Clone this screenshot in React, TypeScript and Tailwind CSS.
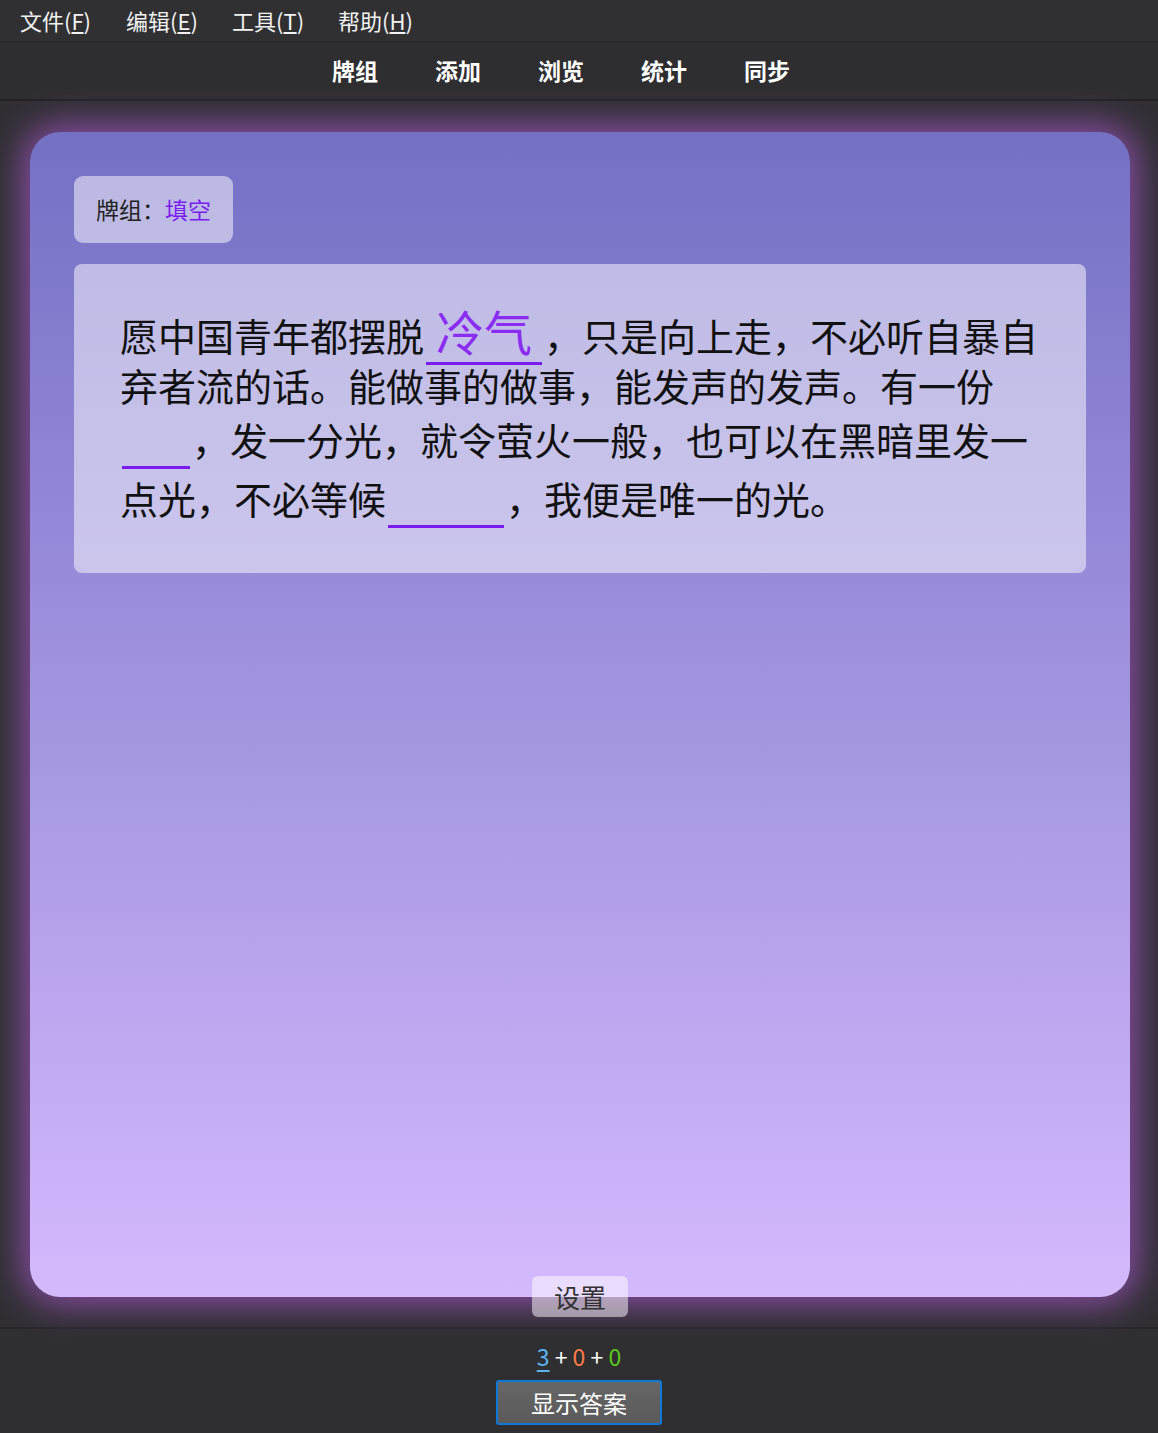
import React from "react";

const sans = { fontFamily: '"Noto Sans CJK SC", "Noto Sans", sans-serif' };

function MenuItem({ label, keyChar }: { label: string; keyChar: string }) {
  return (
    <span className="w-[106px] text-[22px] text-[#f2f2f2]">
      {label}(<u className="underline-offset-2">{keyChar}</u>)
    </span>
  );
}

function Blank({ answer, shown, push }: { answer: string; shown?: boolean; push?: boolean }) {
  return (
    <span
      className={`mx-[2px] inline-block border-b-[3px] border-[#7a1cf0] px-[10px] pb-[8px] text-[48px] leading-[48px] align-baseline ${
        push ? "mb-0" : "mb-[-8px]"
      } ${shown ? "text-[#8a2cf2]" : "text-transparent"}`}
    >
      {answer}
    </span>
  );
}

export default function App() {
  const tabs = ["牌组", "添加", "浏览", "统计", "同步"];

  return (
    <div className="flex h-[1433px] w-full flex-col bg-[#2f2f31]" style={sans}>
      {/* menu bar */}
      <div className="flex h-[42px] items-center border-b border-[#252527] bg-[#303032] px-[20px]">
        <MenuItem label="文件" keyChar="F" />
        <MenuItem label="编辑" keyChar="E" />
        <MenuItem label="工具" keyChar="T" />
        <MenuItem label="帮助" keyChar="H" />
      </div>

      {/* toolbar */}
      <div className="flex h-[59px] items-center justify-center gap-[57px] border-b-2 border-[#222224] bg-[#2e2e30] pr-[36px]">
        {tabs.map((t) => (
          <span key={t} className="text-[23px] font-bold text-white">
            {t}
          </span>
        ))}
      </div>

      {/* main review area */}
      <div className="flex flex-1 flex-col bg-[#302f33] pb-[30px] pl-[30px] pr-[28px] pt-[31px]">
        <div className="relative flex flex-1 flex-col rounded-[30px] bg-gradient-to-b from-[#7470c4] to-[#d5b9fd] p-[44px] shadow-[0_0_34px_8px_rgba(145,80,175,0.9)]">
          <div className="self-start rounded-[9px] bg-white/50 px-[22px] py-[18px] text-[23px] leading-[31px] text-[#222]">
            牌组：<span className="text-[#7a1cf0]">填空</span>
          </div>

          <div className="mt-[21px] rounded-[8px] bg-white/50 px-[46px] pb-[50px] pt-[42px] text-[38px] leading-[50px] text-[#111]">
            愿中国青年都摆脱<Blank answer="冷气" shown />，只是向上走，不必听自暴自弃者流的话。能做事的做事，能发声的发声。有一份
            <Blank answer="热" push />，发一分光，就令萤火一般，也可以在黑暗里发一点光，不必等候<Blank answer="炬火" />，我便是唯一的光。
          </div>

          <button className="absolute bottom-[-20px] left-1/2 h-[41px] w-[96px] -translate-x-1/2 rounded-[6px] bg-white/50 text-[26px] leading-[41px] text-[#333]">
            设置
          </button>
        </div>
      </div>

      {/* bottom bar */}
      <div className="flex h-[106px] flex-col items-center border-t-2 border-[#262628] bg-[#2f2f31] pt-[12px]">
        <div className="text-[23px] leading-[30px] text-white">
          <u className="text-[#5ab4f2] underline-offset-4">3</u>
          <span> + </span>
          <span className="text-[#ff7c45]">0</span>
          <span> + </span>
          <span className="text-[#5cc81a]">0</span>
        </div>
        <button className="mt-[9px] h-[45px] w-[166px] rounded-[3px] border-2 border-[#0c78d8] bg-gradient-to-b from-[#666] to-[#5a5a5a] text-[24px] leading-[40px] text-white">
          显示答案
        </button>
      </div>
    </div>
  );
}
